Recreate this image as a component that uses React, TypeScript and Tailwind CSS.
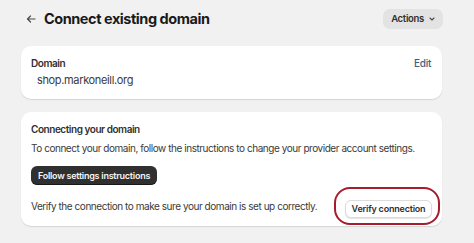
import React from "react";

export default function App() {
  return (
    <div
      className="w-[474px] h-[243px] bg-[#f1f1f1] overflow-hidden text-[#303030]"
      style={{ fontFamily: "Inter, 'Noto Sans', sans-serif" }}
    >
      <div className="pl-[21px] pr-[31px] pt-[9px]">
        <div className="flex items-center justify-between h-[20px]">
          <div className="flex items-center gap-[8px] pl-[5px]">
            <svg width="10" height="10" viewBox="0 0 10 10" className="text-[#4a4a4a]">
              <path d="M9 5H1.5M4.5 2L1.5 5l3 3" fill="none" stroke="currentColor" strokeWidth="1.2" strokeLinecap="round" strokeLinejoin="round" />
            </svg>
            <h1 className="text-[14.5px] font-bold tracking-[-0.45px] text-[#1a1a1a] leading-none">Connect existing domain</h1>
          </div>
          <button className="flex items-center gap-[4px] h-[20px] pl-[8px] pr-[7px] rounded-[7px] bg-[#e3e3e3] text-[9.5px] font-semibold tracking-[-0.3px] text-[#303030]">
            Actions
            <svg width="8" height="8" viewBox="0 0 8 8">
              <path d="M2 3l2 2 2-2" fill="none" stroke="#4a4a4a" strokeWidth="1.1" strokeLinecap="round" strokeLinejoin="round" />
            </svg>
          </button>
        </div>

        <div className="mt-[17px] w-[421px] flex flex-col gap-[13px]">
          <div className="bg-white rounded-[10px] shadow-[0_1px_1px_rgba(0,0,0,0.12)] px-[10px] pt-[10px] pb-[12px]">
            <div className="flex items-center justify-between leading-[14px]">
              <span className="text-[10px] font-semibold tracking-[-0.45px] text-[#303030]">Domain</span>
              <span className="text-[10px] font-medium tracking-[-0.3px] text-[#3b5f7d] pr-[1px]">Edit</span>
            </div>
            <div className="mt-[3px] pl-[6px] text-[11px] leading-[14px] text-[#3a3a3a] tracking-[-0.35px]">shop.markoneill.org</div>
          </div>

          <div className="bg-white rounded-[10px] shadow-[0_1px_1px_rgba(0,0,0,0.12)] px-[10px] pt-[10px] pb-[11px]">
            <div className="text-[10px] font-semibold tracking-[-0.45px] text-[#303030] leading-[14px]">Connecting your domain</div>
            <div className="mt-[5px] text-[10px] tracking-[-0.45px] text-[#3a3a3a] leading-[14px] whitespace-nowrap">
              To connect your domain, follow the instructions to change your provider account settings.
            </div>
            <button className="mt-[11px] h-[19px] w-[126px] rounded-[6px] bg-[#303030] text-[#f5f5f5] text-[9px] font-semibold tracking-[-0.25px] shadow-[inset_0_-1px_0_rgba(0,0,0,0.5)]">
              Follow settings instructions
            </button>
            <div className="mt-[12px] flex items-center justify-between h-[18px]">
              <span className="text-[10px] tracking-[-0.45px] text-[#3a3a3a] whitespace-nowrap">Verify the connection to make sure your domain is set up correctly.</span>
              <div className="relative">
                <button className="h-[18px] w-[87px] rounded-[6px] bg-white border border-[#dcdcdc] shadow-[0_1px_1px_rgba(0,0,0,0.12)] text-[9px] font-semibold tracking-[-0.2px] text-[#303030]">
                  Verify connection
                </button>
                <div className="absolute -left-[11px] -right-[8px] -top-[7px] -bottom-[7px] rounded-[16px] border-[2.5px] border-[#a51d2d]" />
              </div>
            </div>
          </div>
        </div>
      </div>
    </div>
  );
}
